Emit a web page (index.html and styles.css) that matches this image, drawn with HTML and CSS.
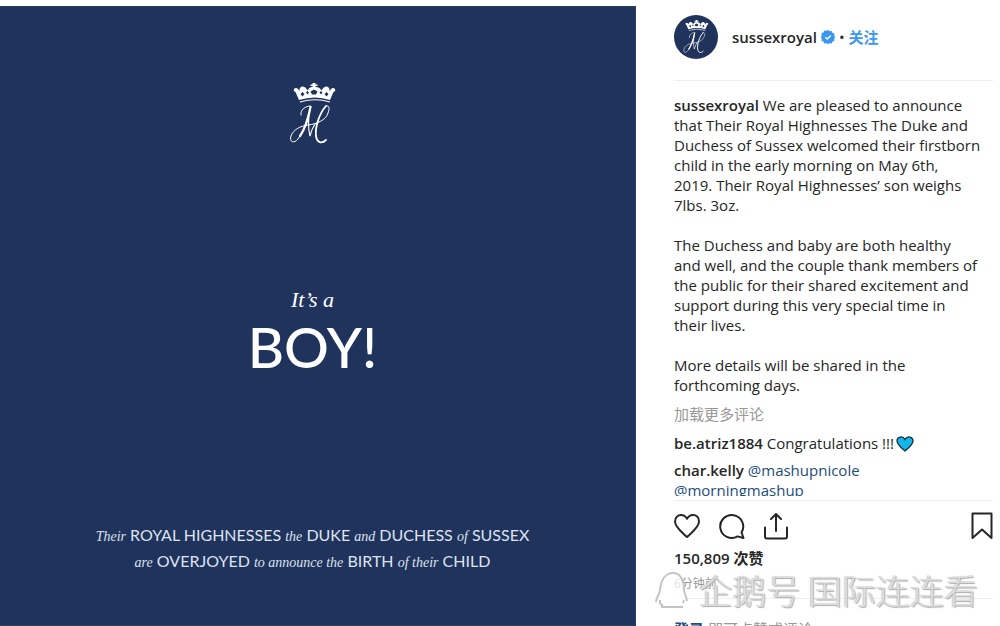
FILE: index.html
```html
<!DOCTYPE html>
<html lang="zh-CN">
<head>
<meta charset="utf-8">
<meta name="viewport" content="width=device-width, initial-scale=1">
<title>sussexroyal</title>
<link rel="stylesheet" href="styles.css">
</head>
<body>
  <svg width="0" height="0" class="defs" aria-hidden="true">
    <symbol id="monogram" viewBox="0 0 46 62">
      <!-- crown -->
      <path fill="currentColor" fill-rule="evenodd" d="M9 17 L5.500 9 Q3 8 4 6 Q6 4 8 6 L9.500 8 Q9 4.500 12 3.500 Q15 3 16.500 6 L18 7.500 Q18.500 4 22.500 4 L22.500 3 H20.500 V1.500 H22.500 V0 H25.500 V1.500 H27.500 V3 H25.500 V4 Q30.500 4 31 7.500 L32.500 6 Q34 3 37 3.500 Q40 4.500 39.500 8.500 L41 6 Q43 4 45 6 Q46 8 43.500 9 L40 17 Q25 12 9 17Z M10.500 11 l2 2.500 2-2.500 -2-2z M16 9.500 l1.500 2 1.500-2 -1.500-1.500z M20.500 8.500 l1.500 3h4l1.500-3 -3.500-2z M29.500 9.500 l1.500 2 1.500-2 -1.500-1.500z M34.500 11 l2 2.500 2-2.500 -2-2z"/>
      <path fill="none" stroke="currentColor" stroke-width="1.200" d="M10 19 Q25 14.500 40 19"/>
      <!-- script letters -->
      <g fill="none" stroke="currentColor" stroke-linecap="round">
        <path stroke-width="1" d="M11 32 C10 27 15 23 21 23 C18 34 14 48 8 56 C4 61 -1 59 1 53 C3 47 10 43 18 42 C27 41 36 37 38 30 C40 25 39 22 36 23"/>
        <path stroke-width="2.200" d="M20.500 24 C18.500 34 15 46 10 53"/>
        <path stroke-width="1.800" d="M36 23 C29 31 25 44 26 53 C27 60 32 61 36 57"/>
        <path stroke-width="1.200" d="M20 26 C18 36 18 45 20 53 C21 49 23 44 25 41"/>
      </g>
    </symbol>
  </svg>

  <article class="post">
    <div class="photo">
      <svg class="crest" role="img" aria-label="Monogram"><use href="#monogram"/></svg>
      <div class="headline">
        <p class="its-a">It’s a</p>
        <h1>BOY!</h1>
      </div>
      <p class="notice">
        <i>Their</i> ROYAL HIGHNESSES <i>the</i> DUKE <i>and</i> DUCHESS <i>of</i> SUSSEX<br>
        <i>are</i> OVERJOYED <i>to announce the</i> BIRTH <i>of their</i> CHILD
      </p>
    </div>

    <div class="panel">
      <header class="post-header">
        <a href="#" class="avatar" aria-label="sussexroyal"><svg><use href="#monogram"/></svg></a>
        <a href="#" class="account">sussexroyal</a>
        <svg class="verified" viewBox="0 0 14 14" aria-hidden="true">
          <path fill="#3897f0" d="M7 0l1.700 1.200 2-.2.900 1.900 1.900.900-.2 2L14 7l-.7 1.700.2 2-1.900.9-.9 1.900-2-.2L7 14l-1.700-.7-2 .2-.9-1.900-1.900-.9.200-2L0 7l.7-1.700-.2-2 1.900-.9.900-1.900 2 .2z"/>
          <path fill="none" stroke="#fff" stroke-width="1.400" d="M4.300 7.200l2 1.900 3.500-3.700"/>
        </svg>
        <span class="dot">•</span>
        <button class="follow">关注</button>
      </header>

      <div class="comments">
        <div class="caption">
          <p><a href="#" class="user">sussexroyal</a> We are pleased to announce that Their Royal Highnesses The Duke and Duchess of Sussex welcomed their firstborn child in the early morning on May 6th, 2019.&nbsp;Their Royal Highnesses’ son weighs 7lbs.&nbsp;3oz.</p>
          <p>The Duchess and baby are both healthy and well, and the couple thank members of the public for their shared excitement and support during this very special time in their lives.</p>
          <p>More details will be shared in the forthcoming days.</p>
        </div>
        <button class="load-more">加载更多评论</button>
        <p class="comment"><a href="#" class="user">be.atriz1884</a> Congratulations !!!<svg class="blue-heart" viewBox="0 0 18 16" role="img" aria-label="blue heart"><path fill="#13b5ea" stroke="#1a2a33" stroke-width="1.300" d="M9 15C5 11.500 1 8.500 1 5c0-4.500 6-5.500 8-1.500C11-.5 17 .5 17 5c0 3.500-4 6.500-8 10z"/></svg></p>
        <p class="comment"><a href="#" class="user">char.kelly</a> <a href="#" class="mention">@mashupnicole</a> <a href="#" class="mention">@morningmashup</a></p>
      </div>

      <footer class="post-footer">
        <div class="actions">
          <button aria-label="赞"><svg viewBox="0 0 28 28"><path d="M13 25C8 20 1 15.500 1 9.500 1 5.500 4 3 7 3c2.500 0 4.500 1.200 6 3.800C14.500 4.200 16.500 3 19 3c3.500 0 6 2.500 6 6.500C25 15.500 18 20 13 25z"/></svg></button>
          <button aria-label="评论"><svg viewBox="0 0 28 28"><path d="M23.500 20.500A11.500 11.500 0 1 0 19.500 24.400L25.500 26z"/></svg></button>
          <button aria-label="分享"><svg viewBox="0 0 28 28"><path d="M3 15.500V24.500Q3 26.500 5 26.500H23Q25 26.500 25 24.500V15.500M14 19V2M9 7L14 2l5 5"/></svg></button>
          <button class="save" aria-label="收藏"><svg viewBox="0 0 22 28"><path d="M1.500 1.500H20.500V26L11 17.500 1.500 26z"/></svg></button>
        </div>
        <p class="likes">150,809 次赞</p>
        <time class="time">6分钟前</time>
        <p class="login"><a href="#">登录</a> 即可点赞或评论</p>
      </footer>
    </div>
  </article>

  <div class="watermark">
    <svg viewBox="0 0 34 38" aria-hidden="true"><path d="M2 31C2 27 5 25 6 19C7 8 12 2 19 2s11 7 11 16c0 5 3 9 3 12M6 29v3l3 3M30 29l-1 3M7 36h22"/></svg>
    <span>企鹅号 国际连连看</span>
  </div>
</body>
</html>
```
FILE: styles.css
```css
* {
  box-sizing: border-box;
}
body {
  margin: 0;
  padding-top: 6px;
  height: 100vh;
  overflow: hidden;
  background-color: #fff;
  color: #262626;
  font-family: "Open Sans", "Noto Sans CJK SC", sans-serif;
  font-size: 15px;
  line-height: 20px;
}
p, h1 {
  margin: 0;
}
a {
  color: inherit;
  text-decoration: none;
}
button {
  padding: 0;
  border: none;
  background: none;
  font: inherit;
  cursor: pointer;
}
.defs {
  position: absolute;
}
.post {
  display: flex;
  height: 100%;
}

/* announcement picture */
.photo {
  flex: 0 0 63.6%;
  display: flex;
  flex-direction: column;
  align-items: center;
  justify-content: space-between;
  padding: 76px 10px 50px 0;
  background-color: #20335c;
  border: 1px solid #2b4160;
  border-left: none;
  color: #fff;
  text-align: center;
}
.crest {
  width: 46px;
  height: 62px;
}
.its-a {
  font-family: "Liberation Serif", serif;
  font-style: italic;
  font-size: 22px;
  line-height: 26px;
}
.headline h1 {
  font-family: Lato, sans-serif;
  font-weight: 500;
  font-size: 56px;
  line-height: 68px;
}
.notice {
  font-family: Lato, sans-serif;
  font-size: 16px;
  line-height: 24px;
  color: #dde3ef;
}
.notice i {
  font-family: "Liberation Serif", serif;
  font-size: 14px;
}

/* right column */
.panel {
  flex: 1;
  min-width: 0;
  display: flex;
  flex-direction: column;
  padding: 0 7px 0 38px;
}
.post-header {
  display: flex;
  align-items: center;
  height: 75px;
  padding-bottom: 12px;
  border-bottom: 1px solid #efefef;
}
.avatar {
  display: flex;
  align-items: center;
  justify-content: center;
  width: 44px;
  height: 44px;
  margin-right: 14px;
  border-radius: 50%;
  background-color: #20335c;
  color: #fff;
}
.avatar svg {
  width: 26px;
  height: 34px;
}
.account, .user, .likes {
  font-weight: 600;
}
.verified {
  width: 14px;
  height: 14px;
  margin-left: 4px;
}
.dot {
  margin: 0 4px;
}
.follow {
  color: #3897f0;
  font-weight: 700;
}
.comments {
  flex: 1;
  min-height: 0;
  overflow: hidden;
  padding: 14px 12px 0 0;
  margin-bottom: 4px;
}
.caption p + p {
  margin-top: 20px;
}
.load-more {
  display: block;
  margin: 9px 0;
  color: #999;
}
.comment {
  margin-bottom: 7px;
}
.blue-heart {
  width: 18px;
  height: 16px;
  margin-left: 2px;
  vertical-align: -3px;
}
.mention {
  color: #1c4d7c;
}
.post-footer {
  border-top: 1px solid #efefef;
}
.actions {
  display: flex;
  gap: 16px;
  padding-top: 11px;
}
.actions svg {
  display: block;
  width: 28px;
  height: 28px;
  fill: none;
  stroke: #262626;
  stroke-width: 2;
  stroke-linejoin: round;
  stroke-linecap: round;
}
.actions .save {
  margin-left: auto;
}
.actions .save svg {
  width: 22px;
}
.likes {
  margin-top: 8px;
}
.time {
  display: block;
  margin-top: 6px;
  font-size: 12px;
  color: #999;
}
.login {
  height: 28px;
  margin-top: 4px;
  padding-top: 20px;
  border-top: 1px solid #efefef;
  overflow: hidden;
  color: #999;
}
.login a {
  color: #1c4d7c;
  font-weight: 700;
}

/* source mark over the bottom right corner */
.watermark {
  position: absolute;
  right: 22px;
  bottom: 16px;
  display: flex;
  align-items: center;
  gap: 10px;
  color: rgba(225, 225, 225, 0.9);
  font-family: "Noto Sans CJK SC", sans-serif;
  font-size: 34px;
  line-height: 40px;
  font-weight: 300;
  text-shadow: 1px 1px 1px #aaa, -1px 0 1px #ccc;
}
.watermark svg {
  width: 34px;
  height: 38px;
  fill: #fff;
  fill-opacity: 0.7;
  stroke: #c4c4c4;
  stroke-width: 2;
}
```
